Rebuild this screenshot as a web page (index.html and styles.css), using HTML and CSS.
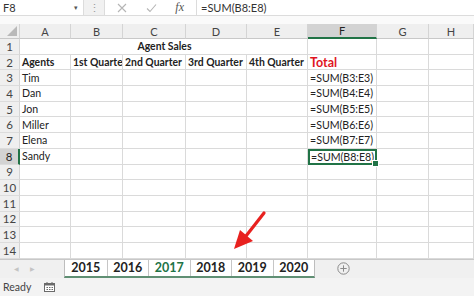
FILE: index.html
```html
<!DOCTYPE html>
<html lang="en">
<head>
<meta charset="UTF-8" />
<title>Agent Sales - Excel</title>
<link rel="stylesheet" href="styles.css">
</head>
<body>
<div class="app">
  <div class="formula-bar">
    <div class="name-box"><span>F8</span><span class="caret">&#9662;</span></div>
    <div class="grip">&#8942;</div>
    <div class="fx-tools">
      <svg width="10" height="10" viewBox="0 0 10 10"><path d="M1 1 L9 9 M9 1 L1 9" stroke="#b5b5b5" stroke-width="1.1"/></svg>
      <svg width="11" height="10" viewBox="0 0 11 10"><path d="M1 5.5 L4 8.5 L10 1.5" stroke="#b5b5b5" stroke-width="1.1" fill="none"/></svg>
      <span class="fx">fx</span>
    </div>
    <div class="formula">=SUM(B8:E8)</div>
  </div>
  <div class="spacer"></div>

  <div class="sheet">
    <div class="corner"><svg width="10" height="10" viewBox="0 0 10 10"><path d="M10 0 L10 10 L0 10 Z" fill="#b9b9b9"/></svg></div>
    <div class="col-h">A</div><div class="col-h">B</div><div class="col-h">C</div><div class="col-h">D</div><div class="col-h">E</div><div class="col-h active">F</div><div class="col-h">G</div><div class="col-h">H</div>

    <div class="row-h">1</div><div class="cell title">Agent Sales</div><div class="cell"></div><div class="cell"></div><div class="cell"></div>
    <div class="row-h">2</div><div class="cell bold">Agents</div><div class="cell bold">1st Quarter</div><div class="cell bold">2nd Quarter</div><div class="cell bold">3rd Quarter</div><div class="cell bold">4th Quarter</div><div class="cell total">Total</div><div class="cell"></div><div class="cell"></div>
    <div class="row-h">3</div><div class="cell">Tim</div><div class="cell"></div><div class="cell"></div><div class="cell"></div><div class="cell"></div><div class="cell">=SUM(B3:E3)</div><div class="cell"></div><div class="cell"></div>
    <div class="row-h">4</div><div class="cell">Dan</div><div class="cell"></div><div class="cell"></div><div class="cell"></div><div class="cell"></div><div class="cell">=SUM(B4:E4)</div><div class="cell"></div><div class="cell"></div>
    <div class="row-h">5</div><div class="cell">Jon</div><div class="cell"></div><div class="cell"></div><div class="cell"></div><div class="cell"></div><div class="cell">=SUM(B5:E5)</div><div class="cell"></div><div class="cell"></div>
    <div class="row-h">6</div><div class="cell">Miller</div><div class="cell"></div><div class="cell"></div><div class="cell"></div><div class="cell"></div><div class="cell">=SUM(B6:E6)</div><div class="cell"></div><div class="cell"></div>
    <div class="row-h">7</div><div class="cell">Elena</div><div class="cell"></div><div class="cell"></div><div class="cell"></div><div class="cell"></div><div class="cell">=SUM(B7:E7)</div><div class="cell"></div><div class="cell"></div>
    <div class="row-h active">8</div><div class="cell">Sandy</div><div class="cell"></div><div class="cell"></div><div class="cell"></div><div class="cell"></div><div class="cell selected">=SUM(B8:E8)</div><div class="cell"></div><div class="cell"></div>
    <div class="row-h">9</div><div class="cell"></div><div class="cell"></div><div class="cell"></div><div class="cell"></div><div class="cell"></div><div class="cell"></div><div class="cell"></div><div class="cell"></div>
    <div class="row-h">10</div><div class="cell"></div><div class="cell"></div><div class="cell"></div><div class="cell"></div><div class="cell"></div><div class="cell"></div><div class="cell"></div><div class="cell"></div>
    <div class="row-h">11</div><div class="cell"></div><div class="cell"></div><div class="cell"></div><div class="cell"></div><div class="cell"></div><div class="cell"></div><div class="cell"></div><div class="cell"></div>
    <div class="row-h">12</div><div class="cell"></div><div class="cell"></div><div class="cell"></div><div class="cell"></div><div class="cell"></div><div class="cell"></div><div class="cell"></div><div class="cell"></div>
    <div class="row-h">13</div><div class="cell"></div><div class="cell"></div><div class="cell"></div><div class="cell"></div><div class="cell"></div><div class="cell"></div><div class="cell"></div><div class="cell"></div>
    <div class="row-h">14</div><div class="cell"></div><div class="cell"></div><div class="cell"></div><div class="cell"></div><div class="cell"></div><div class="cell"></div><div class="cell"></div><div class="cell"></div>

    <!-- annotation arrow pointing at the sheet tabs -->
    <svg class="arrow" width="40" height="44" viewBox="0 0 40 44">
      <path d="M33 3 L15 26" stroke="#e8211f" stroke-width="3.2" stroke-linecap="round"/>
      <path d="M3 39 L9 20 L22 31 Z" fill="#e8211f"/>
    </svg>
  </div>

  <div class="tab-bar">
    <div class="nav"><span>&#9664;</span><span>&#9654;</span></div>
    <div class="tabs">
      <div class="tab">2015</div>
      <div class="tab">2016</div>
      <div class="tab current">2017</div>
      <div class="tab">2018</div>
      <div class="tab">2019</div>
      <div class="tab">2020</div>
    </div>
    <div class="add-sheet">
      <svg width="13" height="13" viewBox="0 0 13 13"><circle cx="6.5" cy="6.5" r="5.7" fill="none" stroke="#8a8a8a" stroke-width="1"/><path d="M6.5 3.3 V9.7 M3.3 6.5 H9.7" stroke="#8a8a8a" stroke-width="1"/></svg>
    </div>
  </div>

  <div class="status-bar">
    <span>Ready</span>
    <svg width="11" height="10" viewBox="0 0 11 10"><rect x="0.5" y="1.5" width="10" height="8" fill="#fff" stroke="#6b6b6b"/><rect x="0.5" y="1.5" width="10" height="2" fill="#6b6b6b"/><path d="M2.5 5.5 H4 M5 5.5 H6.5 M7.5 5.5 H9 M2.5 7.5 H4 M5 7.5 H6.5 M7.5 7.5 H9" stroke="#6b6b6b"/><path d="M3 0 V2 M8 0 V2" stroke="#6b6b6b"/></svg>
  </div>
</div>
</body>
</html>
```

FILE: styles.css
```css
* {
  box-sizing: border-box;
}
body {
  margin: 0;
  font-family: Lato, 'Liberation Sans', Arial, sans-serif;
  background: #fff;
  color: #222;
}
.app {
  width: 474px;
  height: 296px;
  overflow: hidden;
  display: flex;
  flex-direction: column;
}

/* Formula bar */
.formula-bar {
  height: 16px;
  display: flex;
  border-bottom: 1px solid #dcdcdc;
  font-size: 11px;
  color: #333;
}
.name-box {
  width: 84px;
  display: flex;
  align-items: center;
  justify-content: space-between;
  padding: 0 5px 0 3px;
  border-right: 1px solid #dcdcdc;
}
.name-box .caret {
  font-size: 7px;
  color: #555;
}
.grip {
  width: 21px;
  background: #f1f1f1;
  color: #9a9a9a;
  font-size: 11px;
  display: flex;
  align-items: center;
  justify-content: center;
  border-right: 1px solid #dcdcdc;
}
.fx-tools {
  width: 92px;
  display: flex;
  align-items: center;
  justify-content: space-between;
  padding: 0 12px 0 12px;
  border-right: 1px solid #dcdcdc;
}
.fx {
  font-family: 'Liberation Serif', serif;
  font-style: italic;
  font-size: 12px;
  color: #555;
}
.formula {
  flex: 1;
  display: flex;
  align-items: center;
  padding-left: 4px;
}
.spacer {
  height: 8px;
  background: #fafafa;
}

/* Grid */
.sheet {
  position: relative;
  display: grid;
  grid-template-columns: 20px 51px 52px 63px 61px 61px 69px 52px 45px;
  grid-template-rows: 15px repeat(14, 15.7px);
  font-size: 10.6px;
}
.corner,
.col-h,
.row-h {
  background: #efefef;
  color: #444;
  border-right: 1px solid #d4d4d4;
  border-bottom: 1px solid #c8c8c8;
  display: flex;
  align-items: center;
  justify-content: center;
  font-size: 11px;
}
.corner {
  justify-content: flex-end;
  align-items: flex-end;
  padding: 0 2px 2px 0;
}
.col-h.active {
  background: #d3d3d3;
  border-bottom: 2px solid #217346;
  color: #222;
}
.row-h {
  border-bottom: 1px solid #dcdcdc;
  font-size: 11.5px;
}
.row-h.active {
  background: #d3d3d3;
  border-right: 2px solid #217346;
  color: #222;
}
.cell {
  border-right: 1px solid #dadada;
  border-bottom: 1px solid #dadada;
  padding-left: 2px;
  display: flex;
  align-items: center;
  white-space: nowrap;
  overflow: hidden;
}
.cell.bold {
  font-weight: 700;
  font-size: 10.4px;
}
.cell.title {
  grid-column: 2 / 7;
  justify-content: center;
  font-weight: 700;
  font-size: 10.4px;
}
.cell.total {
  color: #e0141e;
  font-weight: 700;
  font-size: 12.5px;
}
.cell.selected {
  position: relative;
  overflow: visible;
  border: 2px solid #217346;
  padding-left: 1px;
}
.cell.selected::after {
  content: "";
  position: absolute;
  right: -4px;
  bottom: -4px;
  width: 5px;
  height: 5px;
  background: #217346;
  border: 1px solid #fff;
}
.arrow {
  position: absolute;
  left: 231px;
  top: 186px;
}

/* Sheet tabs */
.tab-bar {
  height: 19px;
  display: flex;
  background: #f0f0f0;
  border-top: 1px solid #c8c8c8;
}
.nav {
  width: 64px;
  display: flex;
  gap: 11px;
  align-items: center;
  padding-left: 14px;
  font-size: 6px;
  color: #c4c4c4;
}
.tabs {
  display: flex;
  background: #fff;
  border-bottom: 2px solid #5f8f73;
  border-left: 1px solid #bdbdbd;
  border-right: 1px solid #bdbdbd;
}
.tab {
  width: 41.5px;
  display: flex;
  align-items: center;
  justify-content: center;
  font-size: 12.5px;
  font-weight: 700;
  color: #222;
  border-left: 1px solid #c6c6c6;
}
.tab:first-child {
  border-left: none;
}
.tab.current {
  color: #217346;
}
.add-sheet {
  margin-left: 22px;
  display: flex;
  align-items: center;
}

/* Status bar */
.status-bar {
  flex: 1;
  background: #f3f3f3;
  display: flex;
  align-items: center;
  gap: 13px;
  padding-left: 3px;
  font-size: 10.5px;
  color: #444;
}
```
